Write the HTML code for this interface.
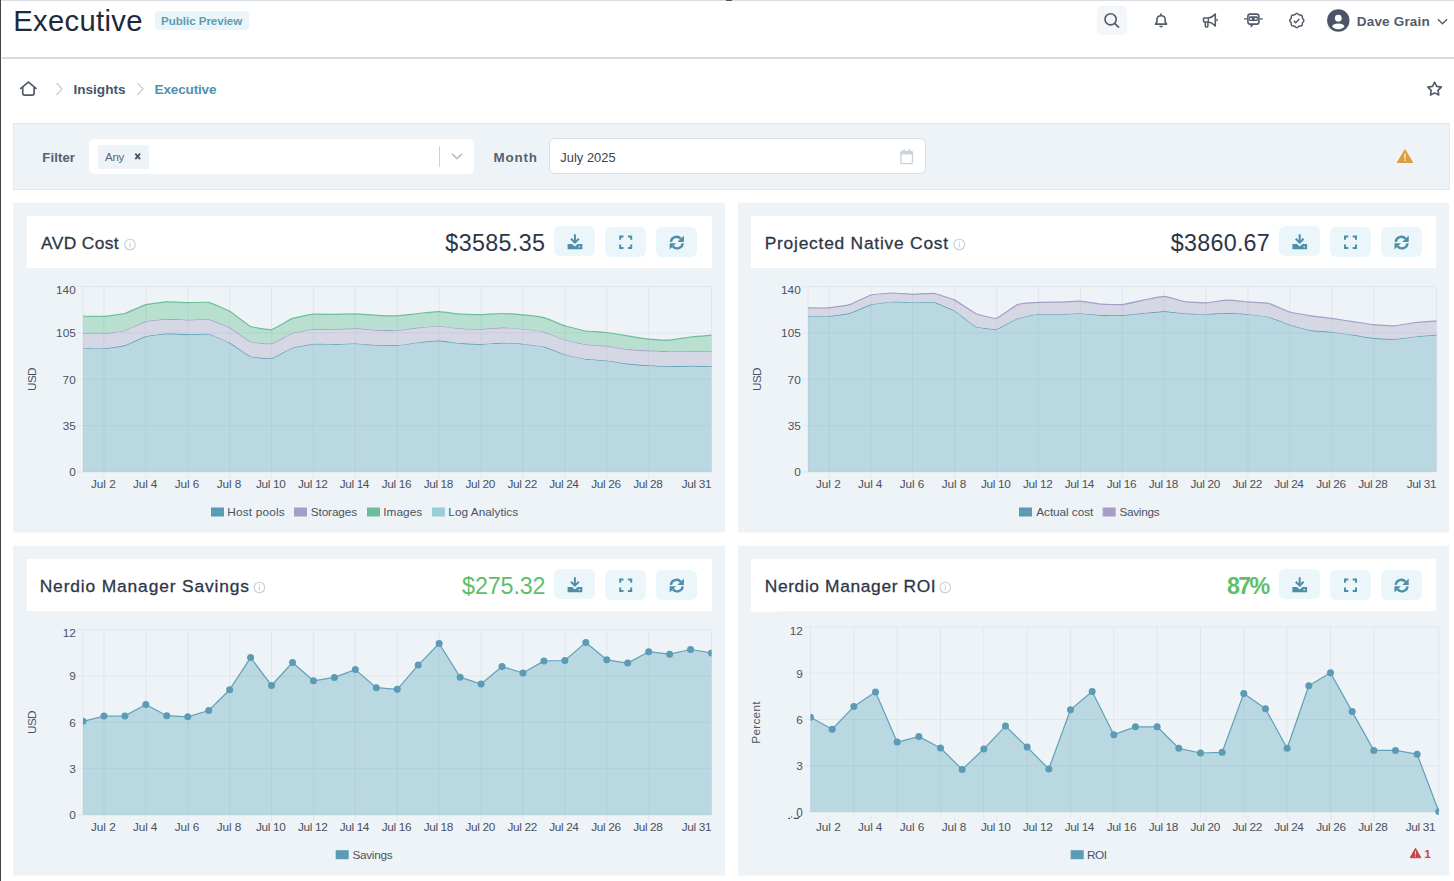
<!DOCTYPE html>
<html><head><meta charset="utf-8"><title>Executive</title>
<style>
html,body{margin:0;padding:0}
body{width:1454px;height:881px;position:relative;overflow:hidden;background:#fff;font-family:'Liberation Sans', sans-serif}
</style></head><body>
<div style="position:absolute;left:13px;top:203px;width:712px;height:329px;background:#eef3f7"></div><div style="position:absolute;left:13px;top:532px;width:712px;height:1px;background:#f6f8fa"></div><div style="position:absolute;left:13px;top:202px;width:712px;height:1px;background:#f8fafb"></div><div style="position:absolute;left:27px;top:216px;width:684.5px;height:52px;background:#fff"></div><div style="position:absolute;left:554.2px;top:226.2px;width:41.3px;height:30px;border-radius:6px;background:#eaf6f9"></div><div style="position:absolute;left:604.9px;top:227.2px;width:41.3px;height:30px;border-radius:6px;background:#eaf6f9"></div><div style="position:absolute;left:656.0px;top:227.2px;width:41.3px;height:30px;border-radius:6px;background:#eaf6f9"></div><div style="position:absolute;left:738px;top:203px;width:711px;height:329px;background:#eef3f7"></div><div style="position:absolute;left:738px;top:532px;width:711px;height:1px;background:#f6f8fa"></div><div style="position:absolute;left:738px;top:202px;width:711px;height:1px;background:#f8fafb"></div><div style="position:absolute;left:751px;top:216px;width:684.5px;height:52px;background:#fff"></div><div style="position:absolute;left:1279.0px;top:226.2px;width:41.3px;height:30px;border-radius:6px;background:#eaf6f9"></div><div style="position:absolute;left:1329.7px;top:227.2px;width:41.3px;height:30px;border-radius:6px;background:#eaf6f9"></div><div style="position:absolute;left:1380.8px;top:227.2px;width:41.3px;height:30px;border-radius:6px;background:#eaf6f9"></div><div style="position:absolute;left:13px;top:546px;width:712px;height:329px;background:#eef3f7"></div><div style="position:absolute;left:13px;top:875px;width:712px;height:1px;background:#f6f8fa"></div><div style="position:absolute;left:13px;top:545px;width:712px;height:1px;background:#f8fafb"></div><div style="position:absolute;left:27px;top:559px;width:684.5px;height:52px;background:#fff"></div><div style="position:absolute;left:554.2px;top:569.2px;width:41.3px;height:30px;border-radius:6px;background:#eaf6f9"></div><div style="position:absolute;left:604.9px;top:570.2px;width:41.3px;height:30px;border-radius:6px;background:#eaf6f9"></div><div style="position:absolute;left:656.0px;top:570.2px;width:41.3px;height:30px;border-radius:6px;background:#eaf6f9"></div><div style="position:absolute;left:738px;top:546px;width:711px;height:329px;background:#eef3f7"></div><div style="position:absolute;left:738px;top:875px;width:711px;height:1px;background:#f6f8fa"></div><div style="position:absolute;left:738px;top:545px;width:711px;height:1px;background:#f8fafb"></div><div style="position:absolute;left:751px;top:559px;width:684.5px;height:52px;background:#fff"></div><div style="position:absolute;left:1279.0px;top:569.2px;width:41.3px;height:30px;border-radius:6px;background:#eaf6f9"></div><div style="position:absolute;left:1329.7px;top:570.2px;width:41.3px;height:30px;border-radius:6px;background:#eaf6f9"></div><div style="position:absolute;left:1380.8px;top:570.2px;width:41.3px;height:30px;border-radius:6px;background:#eaf6f9"></div><div style="position:absolute;left:0;top:0;width:1454px;height:1px;background:#dadee3"></div>
<div style="position:absolute;left:726px;top:0;width:6px;height:1px;background:#555"></div>
<div style="position:absolute;left:752px;top:611px;width:29px;height:1px;background:#fafbfc"></div>
<div style="position:absolute;left:0;top:0;width:1px;height:881px;background:#444"></div>
<div style="position:absolute;left:155px;top:11px;width:93.6px;height:19px;border-radius:4px;background:#e9f5f8"></div>
<div style="position:absolute;left:1.5px;top:57px;width:1452.5px;height:2px;background:#d4dce3"></div>
<div style="position:absolute;left:1097px;top:6px;width:29.6px;height:29.4px;border-radius:5px;background:#f4f7fa"></div>
<div style="position:absolute;left:13px;top:123px;width:1434.5px;height:64.5px;background:#eef3f7;border:1px solid #e3e9ee"></div>
<div style="position:absolute;left:89px;top:138.6px;width:384.7px;height:35.6px;border-radius:5px;background:#fff"></div>
<div style="position:absolute;left:98px;top:145.2px;width:50.7px;height:23.6px;border-radius:2px;background:#eef3f7"></div>
<div style="position:absolute;left:439px;top:146px;width:1px;height:21px;background:#d0d0d0"></div>
<div style="position:absolute;left:549px;top:138px;width:375px;height:34px;border-radius:6px;background:#fff;border:1px solid #d9e0e8"></div>

<svg style="position:absolute;left:0;top:0" width="1454" height="881" viewBox="0 0 1454 881" font-family="Liberation Sans, sans-serif"><line x1="77.0" y1="286.50" x2="711.5" y2="286.50" stroke="#e1e7ec" stroke-width="1"/><line x1="77.0" y1="332.88" x2="711.5" y2="332.88" stroke="#e1e7ec" stroke-width="1"/><line x1="77.0" y1="379.25" x2="711.5" y2="379.25" stroke="#e1e7ec" stroke-width="1"/><line x1="77.0" y1="425.62" x2="711.5" y2="425.62" stroke="#e1e7ec" stroke-width="1"/><line x1="77.0" y1="472.00" x2="711.5" y2="472.00" stroke="#e1e7ec" stroke-width="1"/><line x1="83.00" y1="286.5" x2="83.00" y2="472.0" stroke="#e1e7ec" stroke-width="1"/><line x1="103.95" y1="286.5" x2="103.95" y2="478.0" stroke="#e1e7ec" stroke-width="1"/><line x1="145.85" y1="286.5" x2="145.85" y2="478.0" stroke="#e1e7ec" stroke-width="1"/><line x1="187.75" y1="286.5" x2="187.75" y2="478.0" stroke="#e1e7ec" stroke-width="1"/><line x1="229.65" y1="286.5" x2="229.65" y2="478.0" stroke="#e1e7ec" stroke-width="1"/><line x1="271.55" y1="286.5" x2="271.55" y2="478.0" stroke="#e1e7ec" stroke-width="1"/><line x1="313.45" y1="286.5" x2="313.45" y2="478.0" stroke="#e1e7ec" stroke-width="1"/><line x1="355.35" y1="286.5" x2="355.35" y2="478.0" stroke="#e1e7ec" stroke-width="1"/><line x1="397.25" y1="286.5" x2="397.25" y2="478.0" stroke="#e1e7ec" stroke-width="1"/><line x1="439.15" y1="286.5" x2="439.15" y2="478.0" stroke="#e1e7ec" stroke-width="1"/><line x1="481.05" y1="286.5" x2="481.05" y2="478.0" stroke="#e1e7ec" stroke-width="1"/><line x1="522.95" y1="286.5" x2="522.95" y2="478.0" stroke="#e1e7ec" stroke-width="1"/><line x1="564.85" y1="286.5" x2="564.85" y2="478.0" stroke="#e1e7ec" stroke-width="1"/><line x1="606.75" y1="286.5" x2="606.75" y2="478.0" stroke="#e1e7ec" stroke-width="1"/><line x1="648.65" y1="286.5" x2="648.65" y2="478.0" stroke="#e1e7ec" stroke-width="1"/><line x1="711.50" y1="286.5" x2="711.50" y2="472.0" stroke="#e1e7ec" stroke-width="1"/><path d="M83.00,348.20 C84.16,348.21 101.62,348.56 103.95,348.40 C106.28,348.24 122.57,345.97 124.90,345.30 C127.23,344.63 143.52,336.95 145.85,336.30 C148.18,335.65 164.47,333.71 166.80,333.60 C169.13,333.49 185.42,334.28 187.75,334.30 C190.08,334.32 206.37,333.44 208.70,333.90 C211.03,334.36 227.32,341.35 229.65,342.60 C231.98,343.85 248.27,355.53 250.60,356.40 C252.93,357.27 269.22,358.68 271.55,358.20 C273.88,357.72 290.17,348.49 292.50,347.70 C294.83,346.91 311.12,344.10 313.45,343.90 C315.78,343.70 332.07,344.12 334.40,344.10 C336.73,344.08 353.02,343.45 355.35,343.50 C357.68,343.55 373.97,344.90 376.30,345.00 C378.63,345.10 394.92,345.44 397.25,345.30 C399.58,345.16 415.87,342.66 418.20,342.40 C420.53,342.14 436.82,340.55 439.15,340.60 C441.48,340.65 457.77,343.11 460.10,343.30 C462.43,343.49 478.72,344.13 481.05,344.10 C483.38,344.07 499.67,342.81 502.00,342.80 C504.33,342.79 520.62,343.69 522.95,343.90 C525.28,344.11 541.57,346.02 543.90,346.60 C546.23,347.18 562.52,353.72 564.85,354.40 C567.18,355.08 583.47,358.56 585.80,358.90 C588.13,359.24 604.42,360.23 606.75,360.50 C609.08,360.77 625.37,363.53 627.70,363.80 C630.03,364.07 646.32,365.26 648.65,365.40 C650.98,365.54 667.27,366.28 669.60,366.30 C671.93,366.32 688.22,365.80 690.55,365.80 C692.88,365.80 710.34,366.27 711.50,366.30 L711.50,472.00 L83.00,472.00 Z" fill="#bad8e1"/><path d="M83.00,348.20 C84.16,348.21 101.62,348.56 103.95,348.40 C106.28,348.24 122.57,345.97 124.90,345.30 C127.23,344.63 143.52,336.95 145.85,336.30 C148.18,335.65 164.47,333.71 166.80,333.60 C169.13,333.49 185.42,334.28 187.75,334.30 C190.08,334.32 206.37,333.44 208.70,333.90 C211.03,334.36 227.32,341.35 229.65,342.60 C231.98,343.85 248.27,355.53 250.60,356.40 C252.93,357.27 269.22,358.68 271.55,358.20 C273.88,357.72 290.17,348.49 292.50,347.70 C294.83,346.91 311.12,344.10 313.45,343.90 C315.78,343.70 332.07,344.12 334.40,344.10 C336.73,344.08 353.02,343.45 355.35,343.50 C357.68,343.55 373.97,344.90 376.30,345.00 C378.63,345.10 394.92,345.44 397.25,345.30 C399.58,345.16 415.87,342.66 418.20,342.40 C420.53,342.14 436.82,340.55 439.15,340.60 C441.48,340.65 457.77,343.11 460.10,343.30 C462.43,343.49 478.72,344.13 481.05,344.10 C483.38,344.07 499.67,342.81 502.00,342.80 C504.33,342.79 520.62,343.69 522.95,343.90 C525.28,344.11 541.57,346.02 543.90,346.60 C546.23,347.18 562.52,353.72 564.85,354.40 C567.18,355.08 583.47,358.56 585.80,358.90 C588.13,359.24 604.42,360.23 606.75,360.50 C609.08,360.77 625.37,363.53 627.70,363.80 C630.03,364.07 646.32,365.26 648.65,365.40 C650.98,365.54 667.27,366.28 669.60,366.30 C671.93,366.32 688.22,365.80 690.55,365.80 C692.88,365.80 710.34,366.27 711.50,366.30" fill="none" stroke="#5b9bb5" stroke-width="1.2"/><path d="M83.00,333.20 C84.16,333.21 101.62,333.55 103.95,333.40 C106.28,333.25 122.57,331.17 124.90,330.50 C127.23,329.83 143.52,321.93 145.85,321.30 C148.18,320.67 164.47,319.18 166.80,319.10 C169.13,319.02 185.42,319.79 187.75,319.80 C190.08,319.81 206.37,318.87 208.70,319.30 C211.03,319.73 227.32,326.36 229.65,327.60 C231.98,328.84 248.27,340.82 250.60,341.70 C252.93,342.58 269.22,343.98 271.55,343.50 C273.88,343.02 290.17,333.79 292.50,333.00 C294.83,332.21 311.12,329.41 313.45,329.20 C315.78,328.99 332.07,329.25 334.40,329.20 C336.73,329.15 353.02,328.25 355.35,328.30 C357.68,328.35 373.97,329.98 376.30,330.10 C378.63,330.22 394.92,330.54 397.25,330.40 C399.58,330.26 415.87,327.84 418.20,327.60 C420.53,327.36 436.82,325.95 439.15,326.00 C441.48,326.05 457.77,328.32 460.10,328.50 C462.43,328.68 478.72,329.25 481.05,329.20 C483.38,329.15 499.67,327.61 502.00,327.60 C504.33,327.59 520.62,328.76 522.95,329.00 C525.28,329.24 541.57,331.31 543.90,331.90 C546.23,332.49 562.52,339.01 564.85,339.70 C567.18,340.39 583.47,344.06 585.80,344.40 C588.13,344.74 604.42,345.63 606.75,345.90 C609.08,346.17 625.37,349.04 627.70,349.30 C630.03,349.56 646.32,350.48 648.65,350.60 C650.98,350.72 667.27,351.47 669.60,351.50 C671.93,351.53 688.22,351.11 690.55,351.10 C692.88,351.09 710.34,351.29 711.50,351.30 L711.50,366.30 C710.34,366.27 692.88,365.80 690.55,365.80 C688.22,365.80 671.93,366.32 669.60,366.30 C667.27,366.28 650.98,365.54 648.65,365.40 C646.32,365.26 630.03,364.07 627.70,363.80 C625.37,363.53 609.08,360.77 606.75,360.50 C604.42,360.23 588.13,359.24 585.80,358.90 C583.47,358.56 567.18,355.08 564.85,354.40 C562.52,353.72 546.23,347.18 543.90,346.60 C541.57,346.02 525.28,344.11 522.95,343.90 C520.62,343.69 504.33,342.79 502.00,342.80 C499.67,342.81 483.38,344.07 481.05,344.10 C478.72,344.13 462.43,343.49 460.10,343.30 C457.77,343.11 441.48,340.65 439.15,340.60 C436.82,340.55 420.53,342.14 418.20,342.40 C415.87,342.66 399.58,345.16 397.25,345.30 C394.92,345.44 378.63,345.10 376.30,345.00 C373.97,344.90 357.68,343.55 355.35,343.50 C353.02,343.45 336.73,344.08 334.40,344.10 C332.07,344.12 315.78,343.70 313.45,343.90 C311.12,344.10 294.83,346.91 292.50,347.70 C290.17,348.49 273.88,357.72 271.55,358.20 C269.22,358.68 252.93,357.27 250.60,356.40 C248.27,355.53 231.98,343.85 229.65,342.60 C227.32,341.35 211.03,334.36 208.70,333.90 C206.37,333.44 190.08,334.32 187.75,334.30 C185.42,334.28 169.13,333.49 166.80,333.60 C164.47,333.71 148.18,335.65 145.85,336.30 C143.52,336.95 127.23,344.63 124.90,345.30 C122.57,345.97 106.28,348.24 103.95,348.40 C101.62,348.56 84.16,348.21 83.00,348.20 Z" fill="#d6d7e4"/><path d="M83.00,333.20 C84.16,333.21 101.62,333.55 103.95,333.40 C106.28,333.25 122.57,331.17 124.90,330.50 C127.23,329.83 143.52,321.93 145.85,321.30 C148.18,320.67 164.47,319.18 166.80,319.10 C169.13,319.02 185.42,319.79 187.75,319.80 C190.08,319.81 206.37,318.87 208.70,319.30 C211.03,319.73 227.32,326.36 229.65,327.60 C231.98,328.84 248.27,340.82 250.60,341.70 C252.93,342.58 269.22,343.98 271.55,343.50 C273.88,343.02 290.17,333.79 292.50,333.00 C294.83,332.21 311.12,329.41 313.45,329.20 C315.78,328.99 332.07,329.25 334.40,329.20 C336.73,329.15 353.02,328.25 355.35,328.30 C357.68,328.35 373.97,329.98 376.30,330.10 C378.63,330.22 394.92,330.54 397.25,330.40 C399.58,330.26 415.87,327.84 418.20,327.60 C420.53,327.36 436.82,325.95 439.15,326.00 C441.48,326.05 457.77,328.32 460.10,328.50 C462.43,328.68 478.72,329.25 481.05,329.20 C483.38,329.15 499.67,327.61 502.00,327.60 C504.33,327.59 520.62,328.76 522.95,329.00 C525.28,329.24 541.57,331.31 543.90,331.90 C546.23,332.49 562.52,339.01 564.85,339.70 C567.18,340.39 583.47,344.06 585.80,344.40 C588.13,344.74 604.42,345.63 606.75,345.90 C609.08,346.17 625.37,349.04 627.70,349.30 C630.03,349.56 646.32,350.48 648.65,350.60 C650.98,350.72 667.27,351.47 669.60,351.50 C671.93,351.53 688.22,351.11 690.55,351.10 C692.88,351.09 710.34,351.29 711.50,351.30" fill="none" stroke="#a69dc8" stroke-width="1.2"/><path d="M83.00,316.20 C84.16,316.21 101.62,316.55 103.95,316.40 C106.28,316.25 122.57,314.16 124.90,313.50 C127.23,312.84 143.52,305.24 145.85,304.60 C148.18,303.96 164.47,302.01 166.80,301.90 C169.13,301.79 185.42,302.57 187.75,302.60 C190.08,302.63 206.37,301.92 208.70,302.40 C211.03,302.88 227.32,309.96 229.65,311.30 C231.98,312.64 248.27,325.48 250.60,326.50 C252.93,327.52 269.22,330.05 271.55,329.60 C273.88,329.15 290.17,319.26 292.50,318.40 C294.83,317.54 311.12,314.42 313.45,314.20 C315.78,313.98 332.07,314.42 334.40,314.40 C336.73,314.38 353.02,313.75 355.35,313.80 C357.68,313.85 373.97,315.19 376.30,315.30 C378.63,315.41 394.92,315.90 397.25,315.80 C399.58,315.70 415.87,313.73 418.20,313.50 C420.53,313.27 436.82,311.66 439.15,311.70 C441.48,311.74 457.77,314.04 460.10,314.20 C462.43,314.36 478.72,314.64 481.05,314.60 C483.38,314.56 499.67,313.48 502.00,313.50 C504.33,313.52 520.62,314.67 522.95,314.90 C525.28,315.13 541.57,316.99 543.90,317.60 C546.23,318.21 562.52,325.06 564.85,325.80 C567.18,326.54 583.47,330.63 585.80,331.00 C588.13,331.37 604.42,332.23 606.75,332.50 C609.08,332.77 625.37,335.53 627.70,335.90 C630.03,336.27 646.32,338.97 648.65,339.20 C650.98,339.43 667.27,340.22 669.60,340.10 C671.93,339.98 688.22,337.27 690.55,337.00 C692.88,336.73 710.34,335.30 711.50,335.20 L711.50,351.30 C710.34,351.29 692.88,351.09 690.55,351.10 C688.22,351.11 671.93,351.53 669.60,351.50 C667.27,351.47 650.98,350.72 648.65,350.60 C646.32,350.48 630.03,349.56 627.70,349.30 C625.37,349.04 609.08,346.17 606.75,345.90 C604.42,345.63 588.13,344.74 585.80,344.40 C583.47,344.06 567.18,340.39 564.85,339.70 C562.52,339.01 546.23,332.49 543.90,331.90 C541.57,331.31 525.28,329.24 522.95,329.00 C520.62,328.76 504.33,327.59 502.00,327.60 C499.67,327.61 483.38,329.15 481.05,329.20 C478.72,329.25 462.43,328.68 460.10,328.50 C457.77,328.32 441.48,326.05 439.15,326.00 C436.82,325.95 420.53,327.36 418.20,327.60 C415.87,327.84 399.58,330.26 397.25,330.40 C394.92,330.54 378.63,330.22 376.30,330.10 C373.97,329.98 357.68,328.35 355.35,328.30 C353.02,328.25 336.73,329.15 334.40,329.20 C332.07,329.25 315.78,328.99 313.45,329.20 C311.12,329.41 294.83,332.21 292.50,333.00 C290.17,333.79 273.88,343.02 271.55,343.50 C269.22,343.98 252.93,342.58 250.60,341.70 C248.27,340.82 231.98,328.84 229.65,327.60 C227.32,326.36 211.03,319.73 208.70,319.30 C206.37,318.87 190.08,319.81 187.75,319.80 C185.42,319.79 169.13,319.02 166.80,319.10 C164.47,319.18 148.18,320.67 145.85,321.30 C143.52,321.93 127.23,329.83 124.90,330.50 C122.57,331.17 106.28,333.25 103.95,333.40 C101.62,333.55 84.16,333.21 83.00,333.20 Z" fill="#b8dfcf"/><path d="M83.00,316.20 C84.16,316.21 101.62,316.55 103.95,316.40 C106.28,316.25 122.57,314.16 124.90,313.50 C127.23,312.84 143.52,305.24 145.85,304.60 C148.18,303.96 164.47,302.01 166.80,301.90 C169.13,301.79 185.42,302.57 187.75,302.60 C190.08,302.63 206.37,301.92 208.70,302.40 C211.03,302.88 227.32,309.96 229.65,311.30 C231.98,312.64 248.27,325.48 250.60,326.50 C252.93,327.52 269.22,330.05 271.55,329.60 C273.88,329.15 290.17,319.26 292.50,318.40 C294.83,317.54 311.12,314.42 313.45,314.20 C315.78,313.98 332.07,314.42 334.40,314.40 C336.73,314.38 353.02,313.75 355.35,313.80 C357.68,313.85 373.97,315.19 376.30,315.30 C378.63,315.41 394.92,315.90 397.25,315.80 C399.58,315.70 415.87,313.73 418.20,313.50 C420.53,313.27 436.82,311.66 439.15,311.70 C441.48,311.74 457.77,314.04 460.10,314.20 C462.43,314.36 478.72,314.64 481.05,314.60 C483.38,314.56 499.67,313.48 502.00,313.50 C504.33,313.52 520.62,314.67 522.95,314.90 C525.28,315.13 541.57,316.99 543.90,317.60 C546.23,318.21 562.52,325.06 564.85,325.80 C567.18,326.54 583.47,330.63 585.80,331.00 C588.13,331.37 604.42,332.23 606.75,332.50 C609.08,332.77 625.37,335.53 627.70,335.90 C630.03,336.27 646.32,338.97 648.65,339.20 C650.98,339.43 667.27,340.22 669.60,340.10 C671.93,339.98 688.22,337.27 690.55,337.00 C692.88,336.73 710.34,335.30 711.50,335.20" fill="none" stroke="#6cbf98" stroke-width="1.2"/><clipPath id="clp1"><polygon points="83.00,316.20 103.95,316.40 124.90,313.50 145.85,304.60 166.80,301.90 187.75,302.60 208.70,302.40 229.65,311.30 250.60,326.50 271.55,329.60 292.50,318.40 313.45,314.20 334.40,314.40 355.35,313.80 376.30,315.30 397.25,315.80 418.20,313.50 439.15,311.70 460.10,314.20 481.05,314.60 502.00,313.50 522.95,314.90 543.90,317.60 564.85,325.80 585.80,331.00 606.75,332.50 627.70,335.90 648.65,339.20 669.60,340.10 690.55,337.00 711.50,335.20 711.5,472.0 83.0,472.0"/></clipPath><g clip-path="url(#clp1)"><line x1="83.0" y1="286.50" x2="711.5" y2="286.50" stroke="#6f9aa9" stroke-opacity="0.12" stroke-width="1"/><line x1="83.0" y1="332.88" x2="711.5" y2="332.88" stroke="#6f9aa9" stroke-opacity="0.12" stroke-width="1"/><line x1="83.0" y1="379.25" x2="711.5" y2="379.25" stroke="#6f9aa9" stroke-opacity="0.12" stroke-width="1"/><line x1="83.0" y1="425.62" x2="711.5" y2="425.62" stroke="#6f9aa9" stroke-opacity="0.12" stroke-width="1"/><line x1="83.0" y1="472.00" x2="711.5" y2="472.00" stroke="#6f9aa9" stroke-opacity="0.12" stroke-width="1"/><line x1="83.00" y1="286.5" x2="83.00" y2="472.0" stroke="#6f9aa9" stroke-opacity="0.12" stroke-width="1"/><line x1="103.95" y1="286.5" x2="103.95" y2="472.0" stroke="#6f9aa9" stroke-opacity="0.12" stroke-width="1"/><line x1="145.85" y1="286.5" x2="145.85" y2="472.0" stroke="#6f9aa9" stroke-opacity="0.12" stroke-width="1"/><line x1="187.75" y1="286.5" x2="187.75" y2="472.0" stroke="#6f9aa9" stroke-opacity="0.12" stroke-width="1"/><line x1="229.65" y1="286.5" x2="229.65" y2="472.0" stroke="#6f9aa9" stroke-opacity="0.12" stroke-width="1"/><line x1="271.55" y1="286.5" x2="271.55" y2="472.0" stroke="#6f9aa9" stroke-opacity="0.12" stroke-width="1"/><line x1="313.45" y1="286.5" x2="313.45" y2="472.0" stroke="#6f9aa9" stroke-opacity="0.12" stroke-width="1"/><line x1="355.35" y1="286.5" x2="355.35" y2="472.0" stroke="#6f9aa9" stroke-opacity="0.12" stroke-width="1"/><line x1="397.25" y1="286.5" x2="397.25" y2="472.0" stroke="#6f9aa9" stroke-opacity="0.12" stroke-width="1"/><line x1="439.15" y1="286.5" x2="439.15" y2="472.0" stroke="#6f9aa9" stroke-opacity="0.12" stroke-width="1"/><line x1="481.05" y1="286.5" x2="481.05" y2="472.0" stroke="#6f9aa9" stroke-opacity="0.12" stroke-width="1"/><line x1="522.95" y1="286.5" x2="522.95" y2="472.0" stroke="#6f9aa9" stroke-opacity="0.12" stroke-width="1"/><line x1="564.85" y1="286.5" x2="564.85" y2="472.0" stroke="#6f9aa9" stroke-opacity="0.12" stroke-width="1"/><line x1="606.75" y1="286.5" x2="606.75" y2="472.0" stroke="#6f9aa9" stroke-opacity="0.12" stroke-width="1"/><line x1="648.65" y1="286.5" x2="648.65" y2="472.0" stroke="#6f9aa9" stroke-opacity="0.12" stroke-width="1"/><line x1="711.50" y1="286.5" x2="711.50" y2="472.0" stroke="#6f9aa9" stroke-opacity="0.12" stroke-width="1"/></g><text x="56.07" y="294.10" font-size="11.8" fill="#4a525f">140</text><text x="56.12" y="337.18" font-size="11.8" fill="#4a525f">105</text><text x="62.61" y="383.55" font-size="11.8" fill="#4a525f">70</text><text x="62.67" y="429.93" font-size="11.8" fill="#4a525f">35</text><text x="69.16" y="476.30" font-size="11.8" fill="#4a525f">0</text><text x="91.02" y="488.10" font-size="11.8" letter-spacing="-0.058" fill="#4a525f">Jul 2</text><text x="132.92" y="488.10" font-size="11.8" letter-spacing="-0.117" fill="#4a525f">Jul 4</text><text x="174.82" y="488.10" font-size="11.8" letter-spacing="-0.087" fill="#4a525f">Jul 6</text><text x="216.72" y="488.10" font-size="11.8" letter-spacing="-0.087" fill="#4a525f">Jul 8</text><text x="256.07" y="488.10" font-size="11.8" letter-spacing="-0.371" fill="#4a525f">Jul 10</text><text x="297.97" y="488.10" font-size="11.8" letter-spacing="-0.336" fill="#4a525f">Jul 12</text><text x="339.87" y="488.10" font-size="11.8" letter-spacing="-0.383" fill="#4a525f">Jul 14</text><text x="381.77" y="488.10" font-size="11.8" letter-spacing="-0.360" fill="#4a525f">Jul 16</text><text x="423.67" y="488.10" font-size="11.8" letter-spacing="-0.360" fill="#4a525f">Jul 18</text><text x="465.57" y="488.10" font-size="11.8" letter-spacing="-0.371" fill="#4a525f">Jul 20</text><text x="507.47" y="488.10" font-size="11.8" letter-spacing="-0.336" fill="#4a525f">Jul 22</text><text x="549.37" y="488.10" font-size="11.8" letter-spacing="-0.383" fill="#4a525f">Jul 24</text><text x="591.27" y="488.10" font-size="11.8" letter-spacing="-0.360" fill="#4a525f">Jul 26</text><text x="633.17" y="488.10" font-size="11.8" letter-spacing="-0.360" fill="#4a525f">Jul 28</text><text x="681.82" y="488.10" font-size="11.8" letter-spacing="-0.348" fill="#4a525f">Jul 31</text><g transform="translate(31.2,379) rotate(-90)"><text x="-11.88" y="4.40" font-size="11.8" letter-spacing="-0.741" fill="#4a525f">USD</text></g><line x1="802.0" y1="286.50" x2="1436.5" y2="286.50" stroke="#e1e7ec" stroke-width="1"/><line x1="802.0" y1="332.88" x2="1436.5" y2="332.88" stroke="#e1e7ec" stroke-width="1"/><line x1="802.0" y1="379.25" x2="1436.5" y2="379.25" stroke="#e1e7ec" stroke-width="1"/><line x1="802.0" y1="425.62" x2="1436.5" y2="425.62" stroke="#e1e7ec" stroke-width="1"/><line x1="802.0" y1="472.00" x2="1436.5" y2="472.00" stroke="#e1e7ec" stroke-width="1"/><line x1="808.00" y1="286.5" x2="808.00" y2="472.0" stroke="#e1e7ec" stroke-width="1"/><line x1="828.95" y1="286.5" x2="828.95" y2="478.0" stroke="#e1e7ec" stroke-width="1"/><line x1="870.85" y1="286.5" x2="870.85" y2="478.0" stroke="#e1e7ec" stroke-width="1"/><line x1="912.75" y1="286.5" x2="912.75" y2="478.0" stroke="#e1e7ec" stroke-width="1"/><line x1="954.65" y1="286.5" x2="954.65" y2="478.0" stroke="#e1e7ec" stroke-width="1"/><line x1="996.55" y1="286.5" x2="996.55" y2="478.0" stroke="#e1e7ec" stroke-width="1"/><line x1="1038.45" y1="286.5" x2="1038.45" y2="478.0" stroke="#e1e7ec" stroke-width="1"/><line x1="1080.35" y1="286.5" x2="1080.35" y2="478.0" stroke="#e1e7ec" stroke-width="1"/><line x1="1122.25" y1="286.5" x2="1122.25" y2="478.0" stroke="#e1e7ec" stroke-width="1"/><line x1="1164.15" y1="286.5" x2="1164.15" y2="478.0" stroke="#e1e7ec" stroke-width="1"/><line x1="1206.05" y1="286.5" x2="1206.05" y2="478.0" stroke="#e1e7ec" stroke-width="1"/><line x1="1247.95" y1="286.5" x2="1247.95" y2="478.0" stroke="#e1e7ec" stroke-width="1"/><line x1="1289.85" y1="286.5" x2="1289.85" y2="478.0" stroke="#e1e7ec" stroke-width="1"/><line x1="1331.75" y1="286.5" x2="1331.75" y2="478.0" stroke="#e1e7ec" stroke-width="1"/><line x1="1373.65" y1="286.5" x2="1373.65" y2="478.0" stroke="#e1e7ec" stroke-width="1"/><line x1="1436.50" y1="286.5" x2="1436.50" y2="472.0" stroke="#e1e7ec" stroke-width="1"/><path d="M808.00,316.20 C809.16,316.20 826.62,316.37 828.95,316.20 C831.28,316.03 847.57,313.74 849.90,313.10 C852.23,312.46 868.52,305.23 870.85,304.60 C873.18,303.97 889.47,301.82 891.80,301.70 C894.13,301.58 910.42,302.38 912.75,302.40 C915.08,302.42 931.37,301.63 933.70,302.10 C936.03,302.57 952.32,309.44 954.65,310.80 C956.98,312.16 973.27,325.49 975.60,326.50 C977.93,327.51 994.22,329.45 996.55,329.00 C998.88,328.55 1015.17,319.23 1017.50,318.40 C1019.83,317.57 1036.12,314.24 1038.45,314.00 C1040.78,313.76 1057.07,314.03 1059.40,314.00 C1061.73,313.97 1078.02,313.44 1080.35,313.50 C1082.68,313.56 1098.97,315.00 1101.30,315.10 C1103.63,315.20 1119.92,315.41 1122.25,315.30 C1124.58,315.19 1140.87,313.32 1143.20,313.10 C1145.53,312.88 1161.82,311.28 1164.15,311.30 C1166.48,311.32 1182.77,313.35 1185.10,313.50 C1187.43,313.65 1203.72,314.02 1206.05,314.00 C1208.38,313.98 1224.67,313.09 1227.00,313.10 C1229.33,313.11 1245.62,313.99 1247.95,314.20 C1250.28,314.41 1266.57,316.32 1268.90,316.90 C1271.23,317.48 1287.52,323.96 1289.85,324.70 C1292.18,325.44 1308.47,329.90 1310.80,330.30 C1313.13,330.70 1329.42,331.65 1331.75,331.90 C1334.08,332.15 1350.37,334.46 1352.70,334.80 C1355.03,335.14 1371.32,337.86 1373.65,338.10 C1375.98,338.34 1392.27,339.29 1394.60,339.20 C1396.93,339.11 1413.22,336.74 1415.55,336.50 C1417.88,336.26 1435.34,334.89 1436.50,334.80 L1436.50,472.00 L808.00,472.00 Z" fill="#bad8e1"/><path d="M808.00,316.20 C809.16,316.20 826.62,316.37 828.95,316.20 C831.28,316.03 847.57,313.74 849.90,313.10 C852.23,312.46 868.52,305.23 870.85,304.60 C873.18,303.97 889.47,301.82 891.80,301.70 C894.13,301.58 910.42,302.38 912.75,302.40 C915.08,302.42 931.37,301.63 933.70,302.10 C936.03,302.57 952.32,309.44 954.65,310.80 C956.98,312.16 973.27,325.49 975.60,326.50 C977.93,327.51 994.22,329.45 996.55,329.00 C998.88,328.55 1015.17,319.23 1017.50,318.40 C1019.83,317.57 1036.12,314.24 1038.45,314.00 C1040.78,313.76 1057.07,314.03 1059.40,314.00 C1061.73,313.97 1078.02,313.44 1080.35,313.50 C1082.68,313.56 1098.97,315.00 1101.30,315.10 C1103.63,315.20 1119.92,315.41 1122.25,315.30 C1124.58,315.19 1140.87,313.32 1143.20,313.10 C1145.53,312.88 1161.82,311.28 1164.15,311.30 C1166.48,311.32 1182.77,313.35 1185.10,313.50 C1187.43,313.65 1203.72,314.02 1206.05,314.00 C1208.38,313.98 1224.67,313.09 1227.00,313.10 C1229.33,313.11 1245.62,313.99 1247.95,314.20 C1250.28,314.41 1266.57,316.32 1268.90,316.90 C1271.23,317.48 1287.52,323.96 1289.85,324.70 C1292.18,325.44 1308.47,329.90 1310.80,330.30 C1313.13,330.70 1329.42,331.65 1331.75,331.90 C1334.08,332.15 1350.37,334.46 1352.70,334.80 C1355.03,335.14 1371.32,337.86 1373.65,338.10 C1375.98,338.34 1392.27,339.29 1394.60,339.20 C1396.93,339.11 1413.22,336.74 1415.55,336.50 C1417.88,336.26 1435.34,334.89 1436.50,334.80" fill="none" stroke="#5b9bb5" stroke-width="1.2"/><path d="M808.00,307.90 C809.16,307.90 826.62,308.08 828.95,307.90 C831.28,307.72 847.57,305.32 849.90,304.60 C852.23,303.88 868.52,295.64 870.85,295.00 C873.18,294.36 889.47,293.04 891.80,293.00 C894.13,292.96 910.42,294.28 912.75,294.30 C915.08,294.32 931.37,293.08 933.70,293.40 C936.03,293.72 952.32,298.98 954.65,300.10 C956.98,301.22 973.27,312.48 975.60,313.50 C977.93,314.52 994.22,318.89 996.55,318.40 C998.88,317.91 1015.17,305.49 1017.50,304.60 C1019.83,303.71 1036.12,302.54 1038.45,302.40 C1040.78,302.26 1057.07,302.17 1059.40,302.10 C1061.73,302.03 1078.02,301.09 1080.35,301.20 C1082.68,301.31 1098.97,303.91 1101.30,304.10 C1103.63,304.29 1119.92,304.82 1122.25,304.60 C1124.58,304.38 1140.87,300.56 1143.20,300.10 C1145.53,299.64 1161.82,296.21 1164.15,296.30 C1166.48,296.39 1182.77,301.34 1185.10,301.70 C1187.43,302.06 1203.72,302.89 1206.05,302.80 C1208.38,302.71 1224.67,300.15 1227.00,300.10 C1229.33,300.05 1245.62,301.71 1247.95,301.90 C1250.28,302.09 1266.57,302.94 1268.90,303.50 C1271.23,304.06 1287.52,311.32 1289.85,312.00 C1292.18,312.68 1308.47,315.44 1310.80,315.80 C1313.13,316.16 1329.42,318.08 1331.75,318.40 C1334.08,318.72 1350.37,321.25 1352.70,321.60 C1355.03,321.95 1371.32,324.47 1373.65,324.70 C1375.98,324.93 1392.27,325.92 1394.60,325.80 C1396.93,325.68 1413.22,322.77 1415.55,322.50 C1417.88,322.23 1435.34,320.99 1436.50,320.90 L1436.50,334.80 C1435.34,334.89 1417.88,336.26 1415.55,336.50 C1413.22,336.74 1396.93,339.11 1394.60,339.20 C1392.27,339.29 1375.98,338.34 1373.65,338.10 C1371.32,337.86 1355.03,335.14 1352.70,334.80 C1350.37,334.46 1334.08,332.15 1331.75,331.90 C1329.42,331.65 1313.13,330.70 1310.80,330.30 C1308.47,329.90 1292.18,325.44 1289.85,324.70 C1287.52,323.96 1271.23,317.48 1268.90,316.90 C1266.57,316.32 1250.28,314.41 1247.95,314.20 C1245.62,313.99 1229.33,313.11 1227.00,313.10 C1224.67,313.09 1208.38,313.98 1206.05,314.00 C1203.72,314.02 1187.43,313.65 1185.10,313.50 C1182.77,313.35 1166.48,311.32 1164.15,311.30 C1161.82,311.28 1145.53,312.88 1143.20,313.10 C1140.87,313.32 1124.58,315.19 1122.25,315.30 C1119.92,315.41 1103.63,315.20 1101.30,315.10 C1098.97,315.00 1082.68,313.56 1080.35,313.50 C1078.02,313.44 1061.73,313.97 1059.40,314.00 C1057.07,314.03 1040.78,313.76 1038.45,314.00 C1036.12,314.24 1019.83,317.57 1017.50,318.40 C1015.17,319.23 998.88,328.55 996.55,329.00 C994.22,329.45 977.93,327.51 975.60,326.50 C973.27,325.49 956.98,312.16 954.65,310.80 C952.32,309.44 936.03,302.57 933.70,302.10 C931.37,301.63 915.08,302.42 912.75,302.40 C910.42,302.38 894.13,301.58 891.80,301.70 C889.47,301.82 873.18,303.97 870.85,304.60 C868.52,305.23 852.23,312.46 849.90,313.10 C847.57,313.74 831.28,316.03 828.95,316.20 C826.62,316.37 809.16,316.20 808.00,316.20 Z" fill="#d6d7e4"/><path d="M808.00,307.90 C809.16,307.90 826.62,308.08 828.95,307.90 C831.28,307.72 847.57,305.32 849.90,304.60 C852.23,303.88 868.52,295.64 870.85,295.00 C873.18,294.36 889.47,293.04 891.80,293.00 C894.13,292.96 910.42,294.28 912.75,294.30 C915.08,294.32 931.37,293.08 933.70,293.40 C936.03,293.72 952.32,298.98 954.65,300.10 C956.98,301.22 973.27,312.48 975.60,313.50 C977.93,314.52 994.22,318.89 996.55,318.40 C998.88,317.91 1015.17,305.49 1017.50,304.60 C1019.83,303.71 1036.12,302.54 1038.45,302.40 C1040.78,302.26 1057.07,302.17 1059.40,302.10 C1061.73,302.03 1078.02,301.09 1080.35,301.20 C1082.68,301.31 1098.97,303.91 1101.30,304.10 C1103.63,304.29 1119.92,304.82 1122.25,304.60 C1124.58,304.38 1140.87,300.56 1143.20,300.10 C1145.53,299.64 1161.82,296.21 1164.15,296.30 C1166.48,296.39 1182.77,301.34 1185.10,301.70 C1187.43,302.06 1203.72,302.89 1206.05,302.80 C1208.38,302.71 1224.67,300.15 1227.00,300.10 C1229.33,300.05 1245.62,301.71 1247.95,301.90 C1250.28,302.09 1266.57,302.94 1268.90,303.50 C1271.23,304.06 1287.52,311.32 1289.85,312.00 C1292.18,312.68 1308.47,315.44 1310.80,315.80 C1313.13,316.16 1329.42,318.08 1331.75,318.40 C1334.08,318.72 1350.37,321.25 1352.70,321.60 C1355.03,321.95 1371.32,324.47 1373.65,324.70 C1375.98,324.93 1392.27,325.92 1394.60,325.80 C1396.93,325.68 1413.22,322.77 1415.55,322.50 C1417.88,322.23 1435.34,320.99 1436.50,320.90" fill="none" stroke="#a69dc8" stroke-width="1.2"/><clipPath id="clp2"><polygon points="808.00,307.90 828.95,307.90 849.90,304.60 870.85,295.00 891.80,293.00 912.75,294.30 933.70,293.40 954.65,300.10 975.60,313.50 996.55,318.40 1017.50,304.60 1038.45,302.40 1059.40,302.10 1080.35,301.20 1101.30,304.10 1122.25,304.60 1143.20,300.10 1164.15,296.30 1185.10,301.70 1206.05,302.80 1227.00,300.10 1247.95,301.90 1268.90,303.50 1289.85,312.00 1310.80,315.80 1331.75,318.40 1352.70,321.60 1373.65,324.70 1394.60,325.80 1415.55,322.50 1436.50,320.90 1436.5,472.0 808.0,472.0"/></clipPath><g clip-path="url(#clp2)"><line x1="808.0" y1="286.50" x2="1436.5" y2="286.50" stroke="#6f9aa9" stroke-opacity="0.12" stroke-width="1"/><line x1="808.0" y1="332.88" x2="1436.5" y2="332.88" stroke="#6f9aa9" stroke-opacity="0.12" stroke-width="1"/><line x1="808.0" y1="379.25" x2="1436.5" y2="379.25" stroke="#6f9aa9" stroke-opacity="0.12" stroke-width="1"/><line x1="808.0" y1="425.62" x2="1436.5" y2="425.62" stroke="#6f9aa9" stroke-opacity="0.12" stroke-width="1"/><line x1="808.0" y1="472.00" x2="1436.5" y2="472.00" stroke="#6f9aa9" stroke-opacity="0.12" stroke-width="1"/><line x1="808.00" y1="286.5" x2="808.00" y2="472.0" stroke="#6f9aa9" stroke-opacity="0.12" stroke-width="1"/><line x1="828.95" y1="286.5" x2="828.95" y2="472.0" stroke="#6f9aa9" stroke-opacity="0.12" stroke-width="1"/><line x1="870.85" y1="286.5" x2="870.85" y2="472.0" stroke="#6f9aa9" stroke-opacity="0.12" stroke-width="1"/><line x1="912.75" y1="286.5" x2="912.75" y2="472.0" stroke="#6f9aa9" stroke-opacity="0.12" stroke-width="1"/><line x1="954.65" y1="286.5" x2="954.65" y2="472.0" stroke="#6f9aa9" stroke-opacity="0.12" stroke-width="1"/><line x1="996.55" y1="286.5" x2="996.55" y2="472.0" stroke="#6f9aa9" stroke-opacity="0.12" stroke-width="1"/><line x1="1038.45" y1="286.5" x2="1038.45" y2="472.0" stroke="#6f9aa9" stroke-opacity="0.12" stroke-width="1"/><line x1="1080.35" y1="286.5" x2="1080.35" y2="472.0" stroke="#6f9aa9" stroke-opacity="0.12" stroke-width="1"/><line x1="1122.25" y1="286.5" x2="1122.25" y2="472.0" stroke="#6f9aa9" stroke-opacity="0.12" stroke-width="1"/><line x1="1164.15" y1="286.5" x2="1164.15" y2="472.0" stroke="#6f9aa9" stroke-opacity="0.12" stroke-width="1"/><line x1="1206.05" y1="286.5" x2="1206.05" y2="472.0" stroke="#6f9aa9" stroke-opacity="0.12" stroke-width="1"/><line x1="1247.95" y1="286.5" x2="1247.95" y2="472.0" stroke="#6f9aa9" stroke-opacity="0.12" stroke-width="1"/><line x1="1289.85" y1="286.5" x2="1289.85" y2="472.0" stroke="#6f9aa9" stroke-opacity="0.12" stroke-width="1"/><line x1="1331.75" y1="286.5" x2="1331.75" y2="472.0" stroke="#6f9aa9" stroke-opacity="0.12" stroke-width="1"/><line x1="1373.65" y1="286.5" x2="1373.65" y2="472.0" stroke="#6f9aa9" stroke-opacity="0.12" stroke-width="1"/><line x1="1436.50" y1="286.5" x2="1436.50" y2="472.0" stroke="#6f9aa9" stroke-opacity="0.12" stroke-width="1"/></g><text x="781.07" y="294.10" font-size="11.8" fill="#4a525f">140</text><text x="781.12" y="337.18" font-size="11.8" fill="#4a525f">105</text><text x="787.61" y="383.55" font-size="11.8" fill="#4a525f">70</text><text x="787.67" y="429.93" font-size="11.8" fill="#4a525f">35</text><text x="794.16" y="476.30" font-size="11.8" fill="#4a525f">0</text><text x="816.02" y="488.10" font-size="11.8" letter-spacing="-0.058" fill="#4a525f">Jul 2</text><text x="857.92" y="488.10" font-size="11.8" letter-spacing="-0.117" fill="#4a525f">Jul 4</text><text x="899.82" y="488.10" font-size="11.8" letter-spacing="-0.087" fill="#4a525f">Jul 6</text><text x="941.72" y="488.10" font-size="11.8" letter-spacing="-0.087" fill="#4a525f">Jul 8</text><text x="981.07" y="488.10" font-size="11.8" letter-spacing="-0.371" fill="#4a525f">Jul 10</text><text x="1022.97" y="488.10" font-size="11.8" letter-spacing="-0.336" fill="#4a525f">Jul 12</text><text x="1064.87" y="488.10" font-size="11.8" letter-spacing="-0.383" fill="#4a525f">Jul 14</text><text x="1106.77" y="488.10" font-size="11.8" letter-spacing="-0.360" fill="#4a525f">Jul 16</text><text x="1148.67" y="488.10" font-size="11.8" letter-spacing="-0.360" fill="#4a525f">Jul 18</text><text x="1190.57" y="488.10" font-size="11.8" letter-spacing="-0.371" fill="#4a525f">Jul 20</text><text x="1232.47" y="488.10" font-size="11.8" letter-spacing="-0.336" fill="#4a525f">Jul 22</text><text x="1274.37" y="488.10" font-size="11.8" letter-spacing="-0.383" fill="#4a525f">Jul 24</text><text x="1316.27" y="488.10" font-size="11.8" letter-spacing="-0.360" fill="#4a525f">Jul 26</text><text x="1358.17" y="488.10" font-size="11.8" letter-spacing="-0.360" fill="#4a525f">Jul 28</text><text x="1406.82" y="488.10" font-size="11.8" letter-spacing="-0.348" fill="#4a525f">Jul 31</text><g transform="translate(756.2,379) rotate(-90)"><text x="-11.88" y="4.40" font-size="11.8" letter-spacing="-0.741" fill="#4a525f">USD</text></g><line x1="77.0" y1="629.80" x2="711.5" y2="629.80" stroke="#e1e7ec" stroke-width="1"/><line x1="77.0" y1="676.10" x2="711.5" y2="676.10" stroke="#e1e7ec" stroke-width="1"/><line x1="77.0" y1="722.40" x2="711.5" y2="722.40" stroke="#e1e7ec" stroke-width="1"/><line x1="77.0" y1="768.70" x2="711.5" y2="768.70" stroke="#e1e7ec" stroke-width="1"/><line x1="77.0" y1="815.00" x2="711.5" y2="815.00" stroke="#e1e7ec" stroke-width="1"/><line x1="83.00" y1="629.8" x2="83.00" y2="815.0" stroke="#e1e7ec" stroke-width="1"/><line x1="103.95" y1="629.8" x2="103.95" y2="821.0" stroke="#e1e7ec" stroke-width="1"/><line x1="145.85" y1="629.8" x2="145.85" y2="821.0" stroke="#e1e7ec" stroke-width="1"/><line x1="187.75" y1="629.8" x2="187.75" y2="821.0" stroke="#e1e7ec" stroke-width="1"/><line x1="229.65" y1="629.8" x2="229.65" y2="821.0" stroke="#e1e7ec" stroke-width="1"/><line x1="271.55" y1="629.8" x2="271.55" y2="821.0" stroke="#e1e7ec" stroke-width="1"/><line x1="313.45" y1="629.8" x2="313.45" y2="821.0" stroke="#e1e7ec" stroke-width="1"/><line x1="355.35" y1="629.8" x2="355.35" y2="821.0" stroke="#e1e7ec" stroke-width="1"/><line x1="397.25" y1="629.8" x2="397.25" y2="821.0" stroke="#e1e7ec" stroke-width="1"/><line x1="439.15" y1="629.8" x2="439.15" y2="821.0" stroke="#e1e7ec" stroke-width="1"/><line x1="481.05" y1="629.8" x2="481.05" y2="821.0" stroke="#e1e7ec" stroke-width="1"/><line x1="522.95" y1="629.8" x2="522.95" y2="821.0" stroke="#e1e7ec" stroke-width="1"/><line x1="564.85" y1="629.8" x2="564.85" y2="821.0" stroke="#e1e7ec" stroke-width="1"/><line x1="606.75" y1="629.8" x2="606.75" y2="821.0" stroke="#e1e7ec" stroke-width="1"/><line x1="648.65" y1="629.8" x2="648.65" y2="821.0" stroke="#e1e7ec" stroke-width="1"/><line x1="711.50" y1="629.8" x2="711.50" y2="815.0" stroke="#e1e7ec" stroke-width="1"/><polygon points="83.00,721.30 103.95,716.10 124.90,715.90 145.85,704.50 166.80,715.70 187.75,716.80 208.70,710.50 229.65,689.70 250.60,657.60 271.55,685.50 292.50,662.50 313.45,680.80 334.40,677.40 355.35,669.60 376.30,687.70 397.25,689.30 418.20,665.10 439.15,643.50 460.10,677.20 481.05,684.10 502.00,666.50 522.95,673.00 543.90,660.90 564.85,660.50 585.80,642.40 606.75,659.80 627.70,663.10 648.65,651.70 669.60,654.20 690.55,649.50 711.50,652.90 711.50,815.00 690.55,815.00 669.60,815.00 648.65,815.00 627.70,815.00 606.75,815.00 585.80,815.00 564.85,815.00 543.90,815.00 522.95,815.00 502.00,815.00 481.05,815.00 460.10,815.00 439.15,815.00 418.20,815.00 397.25,815.00 376.30,815.00 355.35,815.00 334.40,815.00 313.45,815.00 292.50,815.00 271.55,815.00 250.60,815.00 229.65,815.00 208.70,815.00 187.75,815.00 166.80,815.00 145.85,815.00 124.90,815.00 103.95,815.00 83.00,815.00" fill="#bad8e1"/><polyline points="83.00,721.30 103.95,716.10 124.90,715.90 145.85,704.50 166.80,715.70 187.75,716.80 208.70,710.50 229.65,689.70 250.60,657.60 271.55,685.50 292.50,662.50 313.45,680.80 334.40,677.40 355.35,669.60 376.30,687.70 397.25,689.30 418.20,665.10 439.15,643.50 460.10,677.20 481.05,684.10 502.00,666.50 522.95,673.00 543.90,660.90 564.85,660.50 585.80,642.40 606.75,659.80 627.70,663.10 648.65,651.70 669.60,654.20 690.55,649.50 711.50,652.90" fill="none" stroke="#64a2ba" stroke-width="1.25" stroke-linejoin="round"/><clipPath id="clp3"><polygon points="83.00,721.30 103.95,716.10 124.90,715.90 145.85,704.50 166.80,715.70 187.75,716.80 208.70,710.50 229.65,689.70 250.60,657.60 271.55,685.50 292.50,662.50 313.45,680.80 334.40,677.40 355.35,669.60 376.30,687.70 397.25,689.30 418.20,665.10 439.15,643.50 460.10,677.20 481.05,684.10 502.00,666.50 522.95,673.00 543.90,660.90 564.85,660.50 585.80,642.40 606.75,659.80 627.70,663.10 648.65,651.70 669.60,654.20 690.55,649.50 711.50,652.90 711.5,815.0 83.0,815.0"/></clipPath><g clip-path="url(#clp3)"><line x1="83.0" y1="629.80" x2="711.5" y2="629.80" stroke="#6f9aa9" stroke-opacity="0.12" stroke-width="1"/><line x1="83.0" y1="676.10" x2="711.5" y2="676.10" stroke="#6f9aa9" stroke-opacity="0.12" stroke-width="1"/><line x1="83.0" y1="722.40" x2="711.5" y2="722.40" stroke="#6f9aa9" stroke-opacity="0.12" stroke-width="1"/><line x1="83.0" y1="768.70" x2="711.5" y2="768.70" stroke="#6f9aa9" stroke-opacity="0.12" stroke-width="1"/><line x1="83.0" y1="815.00" x2="711.5" y2="815.00" stroke="#6f9aa9" stroke-opacity="0.12" stroke-width="1"/><line x1="83.00" y1="629.8" x2="83.00" y2="815.0" stroke="#6f9aa9" stroke-opacity="0.12" stroke-width="1"/><line x1="103.95" y1="629.8" x2="103.95" y2="815.0" stroke="#6f9aa9" stroke-opacity="0.12" stroke-width="1"/><line x1="145.85" y1="629.8" x2="145.85" y2="815.0" stroke="#6f9aa9" stroke-opacity="0.12" stroke-width="1"/><line x1="187.75" y1="629.8" x2="187.75" y2="815.0" stroke="#6f9aa9" stroke-opacity="0.12" stroke-width="1"/><line x1="229.65" y1="629.8" x2="229.65" y2="815.0" stroke="#6f9aa9" stroke-opacity="0.12" stroke-width="1"/><line x1="271.55" y1="629.8" x2="271.55" y2="815.0" stroke="#6f9aa9" stroke-opacity="0.12" stroke-width="1"/><line x1="313.45" y1="629.8" x2="313.45" y2="815.0" stroke="#6f9aa9" stroke-opacity="0.12" stroke-width="1"/><line x1="355.35" y1="629.8" x2="355.35" y2="815.0" stroke="#6f9aa9" stroke-opacity="0.12" stroke-width="1"/><line x1="397.25" y1="629.8" x2="397.25" y2="815.0" stroke="#6f9aa9" stroke-opacity="0.12" stroke-width="1"/><line x1="439.15" y1="629.8" x2="439.15" y2="815.0" stroke="#6f9aa9" stroke-opacity="0.12" stroke-width="1"/><line x1="481.05" y1="629.8" x2="481.05" y2="815.0" stroke="#6f9aa9" stroke-opacity="0.12" stroke-width="1"/><line x1="522.95" y1="629.8" x2="522.95" y2="815.0" stroke="#6f9aa9" stroke-opacity="0.12" stroke-width="1"/><line x1="564.85" y1="629.8" x2="564.85" y2="815.0" stroke="#6f9aa9" stroke-opacity="0.12" stroke-width="1"/><line x1="606.75" y1="629.8" x2="606.75" y2="815.0" stroke="#6f9aa9" stroke-opacity="0.12" stroke-width="1"/><line x1="648.65" y1="629.8" x2="648.65" y2="815.0" stroke="#6f9aa9" stroke-opacity="0.12" stroke-width="1"/><line x1="711.50" y1="629.8" x2="711.50" y2="815.0" stroke="#6f9aa9" stroke-opacity="0.12" stroke-width="1"/></g><clipPath id="clp4"><rect x="83.0" y="619.8" width="628.5" height="205.20000000000005"/></clipPath><g clip-path="url(#clp4)"><circle cx="83.00" cy="721.30" r="3.5" fill="#5b9bb5"/><circle cx="103.95" cy="716.10" r="3.5" fill="#5b9bb5"/><circle cx="124.90" cy="715.90" r="3.5" fill="#5b9bb5"/><circle cx="145.85" cy="704.50" r="3.5" fill="#5b9bb5"/><circle cx="166.80" cy="715.70" r="3.5" fill="#5b9bb5"/><circle cx="187.75" cy="716.80" r="3.5" fill="#5b9bb5"/><circle cx="208.70" cy="710.50" r="3.5" fill="#5b9bb5"/><circle cx="229.65" cy="689.70" r="3.5" fill="#5b9bb5"/><circle cx="250.60" cy="657.60" r="3.5" fill="#5b9bb5"/><circle cx="271.55" cy="685.50" r="3.5" fill="#5b9bb5"/><circle cx="292.50" cy="662.50" r="3.5" fill="#5b9bb5"/><circle cx="313.45" cy="680.80" r="3.5" fill="#5b9bb5"/><circle cx="334.40" cy="677.40" r="3.5" fill="#5b9bb5"/><circle cx="355.35" cy="669.60" r="3.5" fill="#5b9bb5"/><circle cx="376.30" cy="687.70" r="3.5" fill="#5b9bb5"/><circle cx="397.25" cy="689.30" r="3.5" fill="#5b9bb5"/><circle cx="418.20" cy="665.10" r="3.5" fill="#5b9bb5"/><circle cx="439.15" cy="643.50" r="3.5" fill="#5b9bb5"/><circle cx="460.10" cy="677.20" r="3.5" fill="#5b9bb5"/><circle cx="481.05" cy="684.10" r="3.5" fill="#5b9bb5"/><circle cx="502.00" cy="666.50" r="3.5" fill="#5b9bb5"/><circle cx="522.95" cy="673.00" r="3.5" fill="#5b9bb5"/><circle cx="543.90" cy="660.90" r="3.5" fill="#5b9bb5"/><circle cx="564.85" cy="660.50" r="3.5" fill="#5b9bb5"/><circle cx="585.80" cy="642.40" r="3.5" fill="#5b9bb5"/><circle cx="606.75" cy="659.80" r="3.5" fill="#5b9bb5"/><circle cx="627.70" cy="663.10" r="3.5" fill="#5b9bb5"/><circle cx="648.65" cy="651.70" r="3.5" fill="#5b9bb5"/><circle cx="669.60" cy="654.20" r="3.5" fill="#5b9bb5"/><circle cx="690.55" cy="649.50" r="3.5" fill="#5b9bb5"/><circle cx="711.50" cy="652.90" r="3.5" fill="#5b9bb5"/></g><text x="62.79" y="637.40" font-size="11.8" fill="#4a525f">12</text><text x="69.28" y="680.40" font-size="11.8" fill="#4a525f">9</text><text x="69.22" y="726.70" font-size="11.8" fill="#4a525f">6</text><text x="69.22" y="773.00" font-size="11.8" fill="#4a525f">3</text><text x="69.16" y="819.30" font-size="11.8" fill="#4a525f">0</text><text x="91.02" y="831.10" font-size="11.8" letter-spacing="-0.058" fill="#4a525f">Jul 2</text><text x="132.92" y="831.10" font-size="11.8" letter-spacing="-0.117" fill="#4a525f">Jul 4</text><text x="174.82" y="831.10" font-size="11.8" letter-spacing="-0.087" fill="#4a525f">Jul 6</text><text x="216.72" y="831.10" font-size="11.8" letter-spacing="-0.087" fill="#4a525f">Jul 8</text><text x="256.07" y="831.10" font-size="11.8" letter-spacing="-0.371" fill="#4a525f">Jul 10</text><text x="297.97" y="831.10" font-size="11.8" letter-spacing="-0.336" fill="#4a525f">Jul 12</text><text x="339.87" y="831.10" font-size="11.8" letter-spacing="-0.383" fill="#4a525f">Jul 14</text><text x="381.77" y="831.10" font-size="11.8" letter-spacing="-0.360" fill="#4a525f">Jul 16</text><text x="423.67" y="831.10" font-size="11.8" letter-spacing="-0.360" fill="#4a525f">Jul 18</text><text x="465.57" y="831.10" font-size="11.8" letter-spacing="-0.371" fill="#4a525f">Jul 20</text><text x="507.47" y="831.10" font-size="11.8" letter-spacing="-0.336" fill="#4a525f">Jul 22</text><text x="549.37" y="831.10" font-size="11.8" letter-spacing="-0.383" fill="#4a525f">Jul 24</text><text x="591.27" y="831.10" font-size="11.8" letter-spacing="-0.360" fill="#4a525f">Jul 26</text><text x="633.17" y="831.10" font-size="11.8" letter-spacing="-0.360" fill="#4a525f">Jul 28</text><text x="681.82" y="831.10" font-size="11.8" letter-spacing="-0.348" fill="#4a525f">Jul 31</text><g transform="translate(31.2,722) rotate(-90)"><text x="-11.88" y="4.40" font-size="11.8" letter-spacing="-0.741" fill="#4a525f">USD</text></g><line x1="804.5" y1="627.00" x2="1438.8" y2="627.00" stroke="#e1e7ec" stroke-width="1"/><line x1="804.5" y1="673.25" x2="1438.8" y2="673.25" stroke="#e1e7ec" stroke-width="1"/><line x1="804.5" y1="719.50" x2="1438.8" y2="719.50" stroke="#e1e7ec" stroke-width="1"/><line x1="804.5" y1="765.75" x2="1438.8" y2="765.75" stroke="#e1e7ec" stroke-width="1"/><line x1="804.5" y1="812.00" x2="1438.8" y2="812.00" stroke="#e1e7ec" stroke-width="1"/><line x1="810.50" y1="627.0" x2="810.50" y2="812.0" stroke="#e1e7ec" stroke-width="1"/><line x1="853.83" y1="627.0" x2="853.83" y2="818.0" stroke="#e1e7ec" stroke-width="1"/><line x1="897.16" y1="627.0" x2="897.16" y2="818.0" stroke="#e1e7ec" stroke-width="1"/><line x1="940.49" y1="627.0" x2="940.49" y2="818.0" stroke="#e1e7ec" stroke-width="1"/><line x1="983.82" y1="627.0" x2="983.82" y2="818.0" stroke="#e1e7ec" stroke-width="1"/><line x1="1027.16" y1="627.0" x2="1027.16" y2="818.0" stroke="#e1e7ec" stroke-width="1"/><line x1="1070.49" y1="627.0" x2="1070.49" y2="818.0" stroke="#e1e7ec" stroke-width="1"/><line x1="1113.82" y1="627.0" x2="1113.82" y2="818.0" stroke="#e1e7ec" stroke-width="1"/><line x1="1157.15" y1="627.0" x2="1157.15" y2="818.0" stroke="#e1e7ec" stroke-width="1"/><line x1="1200.48" y1="627.0" x2="1200.48" y2="818.0" stroke="#e1e7ec" stroke-width="1"/><line x1="1243.81" y1="627.0" x2="1243.81" y2="818.0" stroke="#e1e7ec" stroke-width="1"/><line x1="1287.14" y1="627.0" x2="1287.14" y2="818.0" stroke="#e1e7ec" stroke-width="1"/><line x1="1330.47" y1="627.0" x2="1330.47" y2="818.0" stroke="#e1e7ec" stroke-width="1"/><line x1="1373.80" y1="627.0" x2="1373.80" y2="818.0" stroke="#e1e7ec" stroke-width="1"/><line x1="1438.80" y1="627.0" x2="1438.80" y2="812.0" stroke="#e1e7ec" stroke-width="1"/><polygon points="810.50,717.30 832.17,729.20 853.83,706.60 875.50,692.00 897.16,742.10 918.83,736.60 940.49,748.00 962.16,769.50 983.82,749.00 1005.49,726.10 1027.16,747.10 1048.82,769.00 1070.49,709.70 1092.15,691.50 1113.82,734.70 1135.48,726.80 1157.15,726.80 1178.81,748.30 1200.48,753.00 1222.14,752.30 1243.81,693.40 1265.48,708.70 1287.14,748.30 1308.81,685.80 1330.47,672.70 1352.14,711.60 1373.80,750.40 1395.47,750.40 1417.13,754.20 1438.80,811.50 1438.80,812.00 1417.13,812.00 1395.47,812.00 1373.80,812.00 1352.14,812.00 1330.47,812.00 1308.81,812.00 1287.14,812.00 1265.48,812.00 1243.81,812.00 1222.14,812.00 1200.48,812.00 1178.81,812.00 1157.15,812.00 1135.48,812.00 1113.82,812.00 1092.15,812.00 1070.49,812.00 1048.82,812.00 1027.16,812.00 1005.49,812.00 983.82,812.00 962.16,812.00 940.49,812.00 918.83,812.00 897.16,812.00 875.50,812.00 853.83,812.00 832.17,812.00 810.50,812.00" fill="#bad8e1"/><polyline points="810.50,717.30 832.17,729.20 853.83,706.60 875.50,692.00 897.16,742.10 918.83,736.60 940.49,748.00 962.16,769.50 983.82,749.00 1005.49,726.10 1027.16,747.10 1048.82,769.00 1070.49,709.70 1092.15,691.50 1113.82,734.70 1135.48,726.80 1157.15,726.80 1178.81,748.30 1200.48,753.00 1222.14,752.30 1243.81,693.40 1265.48,708.70 1287.14,748.30 1308.81,685.80 1330.47,672.70 1352.14,711.60 1373.80,750.40 1395.47,750.40 1417.13,754.20 1438.80,811.50" fill="none" stroke="#64a2ba" stroke-width="1.25" stroke-linejoin="round"/><clipPath id="clp5"><polygon points="810.50,717.30 832.17,729.20 853.83,706.60 875.50,692.00 897.16,742.10 918.83,736.60 940.49,748.00 962.16,769.50 983.82,749.00 1005.49,726.10 1027.16,747.10 1048.82,769.00 1070.49,709.70 1092.15,691.50 1113.82,734.70 1135.48,726.80 1157.15,726.80 1178.81,748.30 1200.48,753.00 1222.14,752.30 1243.81,693.40 1265.48,708.70 1287.14,748.30 1308.81,685.80 1330.47,672.70 1352.14,711.60 1373.80,750.40 1395.47,750.40 1417.13,754.20 1438.80,811.50 1438.8,812.0 810.5,812.0"/></clipPath><g clip-path="url(#clp5)"><line x1="810.5" y1="627.00" x2="1438.8" y2="627.00" stroke="#6f9aa9" stroke-opacity="0.12" stroke-width="1"/><line x1="810.5" y1="673.25" x2="1438.8" y2="673.25" stroke="#6f9aa9" stroke-opacity="0.12" stroke-width="1"/><line x1="810.5" y1="719.50" x2="1438.8" y2="719.50" stroke="#6f9aa9" stroke-opacity="0.12" stroke-width="1"/><line x1="810.5" y1="765.75" x2="1438.8" y2="765.75" stroke="#6f9aa9" stroke-opacity="0.12" stroke-width="1"/><line x1="810.5" y1="812.00" x2="1438.8" y2="812.00" stroke="#6f9aa9" stroke-opacity="0.12" stroke-width="1"/><line x1="810.50" y1="627.0" x2="810.50" y2="812.0" stroke="#6f9aa9" stroke-opacity="0.12" stroke-width="1"/><line x1="853.83" y1="627.0" x2="853.83" y2="812.0" stroke="#6f9aa9" stroke-opacity="0.12" stroke-width="1"/><line x1="897.16" y1="627.0" x2="897.16" y2="812.0" stroke="#6f9aa9" stroke-opacity="0.12" stroke-width="1"/><line x1="940.49" y1="627.0" x2="940.49" y2="812.0" stroke="#6f9aa9" stroke-opacity="0.12" stroke-width="1"/><line x1="983.82" y1="627.0" x2="983.82" y2="812.0" stroke="#6f9aa9" stroke-opacity="0.12" stroke-width="1"/><line x1="1027.16" y1="627.0" x2="1027.16" y2="812.0" stroke="#6f9aa9" stroke-opacity="0.12" stroke-width="1"/><line x1="1070.49" y1="627.0" x2="1070.49" y2="812.0" stroke="#6f9aa9" stroke-opacity="0.12" stroke-width="1"/><line x1="1113.82" y1="627.0" x2="1113.82" y2="812.0" stroke="#6f9aa9" stroke-opacity="0.12" stroke-width="1"/><line x1="1157.15" y1="627.0" x2="1157.15" y2="812.0" stroke="#6f9aa9" stroke-opacity="0.12" stroke-width="1"/><line x1="1200.48" y1="627.0" x2="1200.48" y2="812.0" stroke="#6f9aa9" stroke-opacity="0.12" stroke-width="1"/><line x1="1243.81" y1="627.0" x2="1243.81" y2="812.0" stroke="#6f9aa9" stroke-opacity="0.12" stroke-width="1"/><line x1="1287.14" y1="627.0" x2="1287.14" y2="812.0" stroke="#6f9aa9" stroke-opacity="0.12" stroke-width="1"/><line x1="1330.47" y1="627.0" x2="1330.47" y2="812.0" stroke="#6f9aa9" stroke-opacity="0.12" stroke-width="1"/><line x1="1373.80" y1="627.0" x2="1373.80" y2="812.0" stroke="#6f9aa9" stroke-opacity="0.12" stroke-width="1"/><line x1="1438.80" y1="627.0" x2="1438.80" y2="812.0" stroke="#6f9aa9" stroke-opacity="0.12" stroke-width="1"/></g><clipPath id="clp6"><rect x="810.5" y="617.0" width="628.3" height="205.0"/></clipPath><g clip-path="url(#clp6)"><circle cx="810.50" cy="717.30" r="3.5" fill="#5b9bb5"/><circle cx="832.17" cy="729.20" r="3.5" fill="#5b9bb5"/><circle cx="853.83" cy="706.60" r="3.5" fill="#5b9bb5"/><circle cx="875.50" cy="692.00" r="3.5" fill="#5b9bb5"/><circle cx="897.16" cy="742.10" r="3.5" fill="#5b9bb5"/><circle cx="918.83" cy="736.60" r="3.5" fill="#5b9bb5"/><circle cx="940.49" cy="748.00" r="3.5" fill="#5b9bb5"/><circle cx="962.16" cy="769.50" r="3.5" fill="#5b9bb5"/><circle cx="983.82" cy="749.00" r="3.5" fill="#5b9bb5"/><circle cx="1005.49" cy="726.10" r="3.5" fill="#5b9bb5"/><circle cx="1027.16" cy="747.10" r="3.5" fill="#5b9bb5"/><circle cx="1048.82" cy="769.00" r="3.5" fill="#5b9bb5"/><circle cx="1070.49" cy="709.70" r="3.5" fill="#5b9bb5"/><circle cx="1092.15" cy="691.50" r="3.5" fill="#5b9bb5"/><circle cx="1113.82" cy="734.70" r="3.5" fill="#5b9bb5"/><circle cx="1135.48" cy="726.80" r="3.5" fill="#5b9bb5"/><circle cx="1157.15" cy="726.80" r="3.5" fill="#5b9bb5"/><circle cx="1178.81" cy="748.30" r="3.5" fill="#5b9bb5"/><circle cx="1200.48" cy="753.00" r="3.5" fill="#5b9bb5"/><circle cx="1222.14" cy="752.30" r="3.5" fill="#5b9bb5"/><circle cx="1243.81" cy="693.40" r="3.5" fill="#5b9bb5"/><circle cx="1265.48" cy="708.70" r="3.5" fill="#5b9bb5"/><circle cx="1287.14" cy="748.30" r="3.5" fill="#5b9bb5"/><circle cx="1308.81" cy="685.80" r="3.5" fill="#5b9bb5"/><circle cx="1330.47" cy="672.70" r="3.5" fill="#5b9bb5"/><circle cx="1352.14" cy="711.60" r="3.5" fill="#5b9bb5"/><circle cx="1373.80" cy="750.40" r="3.5" fill="#5b9bb5"/><circle cx="1395.47" cy="750.40" r="3.5" fill="#5b9bb5"/><circle cx="1417.13" cy="754.20" r="3.5" fill="#5b9bb5"/><circle cx="1438.80" cy="811.50" r="3.5" fill="#5b9bb5"/></g><text x="789.79" y="634.60" font-size="11.8" fill="#4a525f">12</text><text x="796.28" y="677.55" font-size="11.8" fill="#4a525f">9</text><text x="796.22" y="723.80" font-size="11.8" fill="#4a525f">6</text><text x="796.22" y="770.05" font-size="11.8" fill="#4a525f">3</text><g transform="translate(802.3,816.8) scale(1,1.12)"><text x="-6.14" y="0.00" font-size="11.8" fill="#4a525f">0</text></g><path d="M788.2,818.4 L790.2,818.4 M791.2,817.2 L792,816.6 M793.6,818.4 L797.6,818.4 Q799,818 799.2,816.6" fill="none" stroke="#4a525f" stroke-width="1.1"/><line x1="828.95" y1="816" x2="828.95" y2="821" stroke="#e1e7ec" stroke-width="1"/><line x1="870.85" y1="816" x2="870.85" y2="821" stroke="#e1e7ec" stroke-width="1"/><line x1="912.75" y1="816" x2="912.75" y2="821" stroke="#e1e7ec" stroke-width="1"/><line x1="954.65" y1="816" x2="954.65" y2="821" stroke="#e1e7ec" stroke-width="1"/><line x1="996.55" y1="816" x2="996.55" y2="821" stroke="#e1e7ec" stroke-width="1"/><line x1="1038.45" y1="816" x2="1038.45" y2="821" stroke="#e1e7ec" stroke-width="1"/><line x1="1080.35" y1="816" x2="1080.35" y2="821" stroke="#e1e7ec" stroke-width="1"/><line x1="1122.25" y1="816" x2="1122.25" y2="821" stroke="#e1e7ec" stroke-width="1"/><line x1="1164.15" y1="816" x2="1164.15" y2="821" stroke="#e1e7ec" stroke-width="1"/><line x1="1206.05" y1="816" x2="1206.05" y2="821" stroke="#e1e7ec" stroke-width="1"/><line x1="1247.95" y1="816" x2="1247.95" y2="821" stroke="#e1e7ec" stroke-width="1"/><line x1="1289.85" y1="816" x2="1289.85" y2="821" stroke="#e1e7ec" stroke-width="1"/><line x1="1331.75" y1="816" x2="1331.75" y2="821" stroke="#e1e7ec" stroke-width="1"/><line x1="1373.65" y1="816" x2="1373.65" y2="821" stroke="#e1e7ec" stroke-width="1"/><text x="816.02" y="831.10" font-size="11.8" letter-spacing="-0.058" fill="#4a525f">Jul 2</text><text x="857.92" y="831.10" font-size="11.8" letter-spacing="-0.117" fill="#4a525f">Jul 4</text><text x="899.82" y="831.10" font-size="11.8" letter-spacing="-0.087" fill="#4a525f">Jul 6</text><text x="941.72" y="831.10" font-size="11.8" letter-spacing="-0.087" fill="#4a525f">Jul 8</text><text x="981.07" y="831.10" font-size="11.8" letter-spacing="-0.371" fill="#4a525f">Jul 10</text><text x="1022.97" y="831.10" font-size="11.8" letter-spacing="-0.336" fill="#4a525f">Jul 12</text><text x="1064.87" y="831.10" font-size="11.8" letter-spacing="-0.383" fill="#4a525f">Jul 14</text><text x="1106.77" y="831.10" font-size="11.8" letter-spacing="-0.360" fill="#4a525f">Jul 16</text><text x="1148.67" y="831.10" font-size="11.8" letter-spacing="-0.360" fill="#4a525f">Jul 18</text><text x="1190.57" y="831.10" font-size="11.8" letter-spacing="-0.371" fill="#4a525f">Jul 20</text><text x="1232.47" y="831.10" font-size="11.8" letter-spacing="-0.336" fill="#4a525f">Jul 22</text><text x="1274.37" y="831.10" font-size="11.8" letter-spacing="-0.383" fill="#4a525f">Jul 24</text><text x="1316.27" y="831.10" font-size="11.8" letter-spacing="-0.360" fill="#4a525f">Jul 26</text><text x="1358.17" y="831.10" font-size="11.8" letter-spacing="-0.360" fill="#4a525f">Jul 28</text><text x="1405.72" y="831.10" font-size="11.8" letter-spacing="-0.348" fill="#4a525f">Jul 31</text><g transform="translate(755.6,722.2) rotate(-90)"><text x="-21.54" y="4.40" font-size="11.8" letter-spacing="0.259" fill="#4a525f">Percent</text></g><rect x="211" y="507.5" width="13" height="9" fill="#5b9bb5"/><text x="227.36" y="515.90" font-size="11.8" letter-spacing="0.178" fill="#4a525f">Host pools</text><rect x="294" y="507.5" width="13" height="9" fill="#a69dc8"/><text x="310.77" y="515.90" font-size="11.8" letter-spacing="-0.131" fill="#4a525f">Storages</text><rect x="367" y="507.5" width="13" height="9" fill="#6cbf98"/><text x="383.24" y="515.90" font-size="11.8" letter-spacing="0.054" fill="#4a525f">Images</text><rect x="432" y="507.5" width="13" height="9" fill="#98cdd9"/><text x="448.36" y="515.90" font-size="11.8" letter-spacing="0.025" fill="#4a525f">Log Analytics</text><rect x="1019" y="507.5" width="13" height="9" fill="#5b9bb5"/><text x="1036.30" y="515.90" font-size="11.8" letter-spacing="-0.074" fill="#4a525f">Actual cost</text><rect x="1102.7" y="507.5" width="13" height="9" fill="#a69dc8"/><text x="1119.47" y="515.90" font-size="11.8" letter-spacing="-0.311" fill="#4a525f">Savings</text><rect x="335.7" y="850.2" width="13" height="9" fill="#5b9bb5"/><text x="352.47" y="858.60" font-size="11.8" letter-spacing="-0.311" fill="#4a525f">Savings</text><rect x="1070.7" y="850.2" width="13" height="9" fill="#5b9bb5"/><text x="1087.06" y="858.60" font-size="11.8" letter-spacing="-0.470" fill="#4a525f">ROI</text><text x="41.10" y="248.80" font-size="17.4" letter-spacing="0.344" fill="#2d3646" stroke="#2d3646" stroke-width="0.28">AVD Cost</text><g transform="translate(130,244.5)"><circle cx="0" cy="0" r="5.3" fill="none" stroke="#c6cfd9" stroke-width="1.1"/><rect x="-0.55" y="-1" width="1.1" height="3.8" fill="#c6cfd9"/><rect x="-0.55" y="-3" width="1.1" height="1.1" fill="#c6cfd9"/></g><g transform="translate(567.20,233.8)"><path d="M7.7 0.5 V8.6" stroke="#4f8ea7" stroke-width="2" fill="none"/><path d="M3.8 5 L7.7 8.9 L11.6 5" stroke="#4f8ea7" stroke-width="2" fill="none"/><path d="M0.4 10.2 H4.9 L7.7 12.8 L10.5 10.2 H15.1 V15.4 H0.4 Z" fill="#4f8ea7"/><rect x="11.4" y="12.4" width="1.6" height="1.2" fill="#e9f5f8"/></g><g transform="translate(619.20,235.5)"><path d="M1 4.3 V1 H4.3 M8.7 1 H12 V4.3 M12 9.1 V12.4 H8.7 M4.3 12.4 H1 V9.1" stroke="#4f8ea7" stroke-width="2" fill="none"/></g><g transform="translate(669.30,235.6)"><path d="M1.6 6.2 A5.6 5.6 0 0 1 11.4 3.2" stroke="#4f8ea7" stroke-width="2.4" fill="none"/><path d="M14.6 0 V6.4 H8.2 Z" fill="#4f8ea7"/><path d="M13.4 7.8 A5.6 5.6 0 0 1 3.6 10.8" stroke="#4f8ea7" stroke-width="2.4" fill="none"/><path d="M0.4 14 V7.6 H6.8 Z" fill="#4f8ea7"/></g><text x="445.37" y="250.90" font-size="23.3" letter-spacing="0.343" fill="#2d3646">$3585.35</text><text x="764.71" y="248.80" font-size="17.4" letter-spacing="0.761" fill="#2d3646" stroke="#2d3646" stroke-width="0.28">Projected Native Cost</text><g transform="translate(959.3,244.5)"><circle cx="0" cy="0" r="5.3" fill="none" stroke="#c6cfd9" stroke-width="1.1"/><rect x="-0.55" y="-1" width="1.1" height="3.8" fill="#c6cfd9"/><rect x="-0.55" y="-3" width="1.1" height="1.1" fill="#c6cfd9"/></g><g transform="translate(1292.00,233.8)"><path d="M7.7 0.5 V8.6" stroke="#4f8ea7" stroke-width="2" fill="none"/><path d="M3.8 5 L7.7 8.9 L11.6 5" stroke="#4f8ea7" stroke-width="2" fill="none"/><path d="M0.4 10.2 H4.9 L7.7 12.8 L10.5 10.2 H15.1 V15.4 H0.4 Z" fill="#4f8ea7"/><rect x="11.4" y="12.4" width="1.6" height="1.2" fill="#e9f5f8"/></g><g transform="translate(1344.00,235.5)"><path d="M1 4.3 V1 H4.3 M8.7 1 H12 V4.3 M12 9.1 V12.4 H8.7 M4.3 12.4 H1 V9.1" stroke="#4f8ea7" stroke-width="2" fill="none"/></g><g transform="translate(1394.10,235.6)"><path d="M1.6 6.2 A5.6 5.6 0 0 1 11.4 3.2" stroke="#4f8ea7" stroke-width="2.4" fill="none"/><path d="M14.6 0 V6.4 H8.2 Z" fill="#4f8ea7"/><path d="M13.4 7.8 A5.6 5.6 0 0 1 3.6 10.8" stroke="#4f8ea7" stroke-width="2.4" fill="none"/><path d="M0.4 14 V7.6 H6.8 Z" fill="#4f8ea7"/></g><text x="1170.87" y="250.90" font-size="23.3" letter-spacing="0.248" fill="#2d3646">$3860.67</text><text x="39.71" y="591.80" font-size="17.4" letter-spacing="0.853" fill="#2d3646" stroke="#2d3646" stroke-width="0.28">Nerdio Manager Savings</text><g transform="translate(259.4,587.5)"><circle cx="0" cy="0" r="5.3" fill="none" stroke="#c6cfd9" stroke-width="1.1"/><rect x="-0.55" y="-1" width="1.1" height="3.8" fill="#c6cfd9"/><rect x="-0.55" y="-3" width="1.1" height="1.1" fill="#c6cfd9"/></g><g transform="translate(567.20,576.8)"><path d="M7.7 0.5 V8.6" stroke="#4f8ea7" stroke-width="2" fill="none"/><path d="M3.8 5 L7.7 8.9 L11.6 5" stroke="#4f8ea7" stroke-width="2" fill="none"/><path d="M0.4 10.2 H4.9 L7.7 12.8 L10.5 10.2 H15.1 V15.4 H0.4 Z" fill="#4f8ea7"/><rect x="11.4" y="12.4" width="1.6" height="1.2" fill="#e9f5f8"/></g><g transform="translate(619.20,578.5)"><path d="M1 4.3 V1 H4.3 M8.7 1 H12 V4.3 M12 9.1 V12.4 H8.7 M4.3 12.4 H1 V9.1" stroke="#4f8ea7" stroke-width="2" fill="none"/></g><g transform="translate(669.30,578.6)"><path d="M1.6 6.2 A5.6 5.6 0 0 1 11.4 3.2" stroke="#4f8ea7" stroke-width="2.4" fill="none"/><path d="M14.6 0 V6.4 H8.2 Z" fill="#4f8ea7"/><path d="M13.4 7.8 A5.6 5.6 0 0 1 3.6 10.8" stroke="#4f8ea7" stroke-width="2.4" fill="none"/><path d="M0.4 14 V7.6 H6.8 Z" fill="#4f8ea7"/></g><text x="462.07" y="593.90" font-size="23.3" letter-spacing="-0.122" fill="#5dbf6c">$275.32</text><text x="764.71" y="591.80" font-size="17.4" letter-spacing="0.620" fill="#2d3646" stroke="#2d3646" stroke-width="0.28">Nerdio Manager ROI</text><g transform="translate(945.2,587.5)"><circle cx="0" cy="0" r="5.3" fill="none" stroke="#c6cfd9" stroke-width="1.1"/><rect x="-0.55" y="-1" width="1.1" height="3.8" fill="#c6cfd9"/><rect x="-0.55" y="-3" width="1.1" height="1.1" fill="#c6cfd9"/></g><g transform="translate(1292.00,576.8)"><path d="M7.7 0.5 V8.6" stroke="#4f8ea7" stroke-width="2" fill="none"/><path d="M3.8 5 L7.7 8.9 L11.6 5" stroke="#4f8ea7" stroke-width="2" fill="none"/><path d="M0.4 10.2 H4.9 L7.7 12.8 L10.5 10.2 H15.1 V15.4 H0.4 Z" fill="#4f8ea7"/><rect x="11.4" y="12.4" width="1.6" height="1.2" fill="#e9f5f8"/></g><g transform="translate(1344.00,578.5)"><path d="M1 4.3 V1 H4.3 M8.7 1 H12 V4.3 M12 9.1 V12.4 H8.7 M4.3 12.4 H1 V9.1" stroke="#4f8ea7" stroke-width="2" fill="none"/></g><g transform="translate(1394.10,578.6)"><path d="M1.6 6.2 A5.6 5.6 0 0 1 11.4 3.2" stroke="#4f8ea7" stroke-width="2.4" fill="none"/><path d="M14.6 0 V6.4 H8.2 Z" fill="#4f8ea7"/><path d="M13.4 7.8 A5.6 5.6 0 0 1 3.6 10.8" stroke="#4f8ea7" stroke-width="2.4" fill="none"/><path d="M0.4 14 V7.6 H6.8 Z" fill="#4f8ea7"/></g><text x="1227.10" y="594.00" font-size="23.3" font-weight="bold" letter-spacing="-1.759" fill="#5dbf6c">87%</text><text x="13.16" y="31.30" font-size="29.2" letter-spacing="0.333" fill="#1f293a">Executive</text><text x="161.05" y="25.40" font-size="11.6" font-weight="bold" letter-spacing="-0.049" fill="#5b9cb6">Public Preview</text><text x="1356.82" y="26.20" font-size="13.5" font-weight="bold" letter-spacing="0.179" fill="#525c6b">Dave Grain</text><text x="73.42" y="94.20" font-size="13.6" font-weight="bold" fill="#4b5567">Insights</text><text x="154.62" y="94.20" font-size="13.6" font-weight="bold" letter-spacing="-0.206" fill="#4f92af">Executive</text><text x="42.24" y="161.80" font-size="13.2" font-weight="bold" letter-spacing="0.096" fill="#586070">Filter</text><text x="105.00" y="160.90" font-size="11.6" letter-spacing="-0.355" fill="#5d6573">Any</text><text x="493.53" y="162.20" font-size="13.4" font-weight="bold" letter-spacing="0.819" fill="#586070">Month</text><text x="560.21" y="162.10" font-size="12.9" letter-spacing="0.037" fill="#3c4350">July 2025</text><circle cx="1110.6" cy="19.3" r="5.6" fill="none" stroke="#505a69" stroke-width="1.6"/><path d="M1114.6,23.3 L1119,27.6" stroke="#505a69" stroke-width="1.7"/><path d="M1155.4,24.1 H1166.7 L1165.2,22 V19.8 Q1165.2,15.8 1161.05,15.8 Q1156.9,15.8 1156.9,19.8 V22 Z" fill="none" stroke="#505a69" stroke-width="1.6" stroke-linejoin="round"/><path d="M1161.05,13.4 V15.8" stroke="#505a69" stroke-width="1.7"/><path d="M1159.3,25.8 H1162.8 V26.5 Q1161.05,28.3 1159.3,26.5 Z" fill="#505a69"/><path d="M1204.4,17.9 H1208.3 Q1212,17.6 1215.3,14.1 V25.9 Q1212,22.3 1208.3,22 H1204.4 Q1203.5,22 1203.5,21.1 V18.8 Q1203.5,17.9 1204.4,17.9 Z" fill="none" stroke="#505a69" stroke-width="1.55" stroke-linejoin="round"/><path d="M1208.3,17.9 V22" stroke="#505a69" stroke-width="1.3"/><path d="M1205.3,22 V25.9 Q1205.3,27 1206.6,27 Q1207.9,27 1207.9,25.9 V22" fill="none" stroke="#505a69" stroke-width="1.5"/><path d="M1216.6,19.1 Q1217.6,20 1216.6,20.9" fill="none" stroke="#505a69" stroke-width="1.4"/><rect x="1247.9" y="14.1" width="11" height="10" rx="2.2" fill="none" stroke="#505a69" stroke-width="1.6"/><rect x="1249" y="16.2" width="8.8" height="4.8" rx="1" fill="#505a69"/><rect x="1249.9" y="17.9" width="2.1" height="1.8" fill="#e8eaee"/><rect x="1254.6" y="17.9" width="2.1" height="1.8" fill="#e8eaee"/><path d="M1244,18.8 H1247.1 M1259.7,18.8 H1262.8" stroke="#505a69" stroke-width="1.3"/><path d="M1250.2,24 L1250.9,27.8 L1254.2,24 Z" fill="#505a69"/><path d="M1303.90,20.50 L1303.82,20.96 L1303.59,21.39 L1303.27,21.79 L1302.93,22.14 L1302.64,22.48 L1302.44,22.83 L1302.33,23.23 L1302.30,23.68 L1302.29,24.17 L1302.23,24.67 L1302.09,25.14 L1301.82,25.52 L1301.44,25.79 L1300.97,25.93 L1300.47,25.99 L1299.97,26.00 L1299.53,26.03 L1299.13,26.14 L1298.78,26.34 L1298.44,26.63 L1298.09,26.97 L1297.69,27.29 L1297.26,27.52 L1296.80,27.60 L1296.34,27.52 L1295.91,27.29 L1295.51,26.97 L1295.16,26.63 L1294.82,26.34 L1294.47,26.14 L1294.07,26.03 L1293.62,26.00 L1293.13,25.99 L1292.63,25.93 L1292.16,25.79 L1291.78,25.52 L1291.51,25.14 L1291.37,24.67 L1291.31,24.17 L1291.30,23.68 L1291.27,23.23 L1291.16,22.83 L1290.96,22.48 L1290.67,22.14 L1290.33,21.79 L1290.01,21.39 L1289.78,20.96 L1289.70,20.50 L1289.78,20.04 L1290.01,19.61 L1290.33,19.21 L1290.67,18.86 L1290.96,18.52 L1291.16,18.17 L1291.27,17.77 L1291.30,17.33 L1291.31,16.83 L1291.37,16.33 L1291.51,15.86 L1291.78,15.48 L1292.16,15.21 L1292.63,15.07 L1293.13,15.01 L1293.62,15.00 L1294.07,14.97 L1294.47,14.86 L1294.82,14.66 L1295.16,14.37 L1295.51,14.03 L1295.91,13.71 L1296.34,13.48 L1296.80,13.40 L1297.26,13.48 L1297.69,13.71 L1298.09,14.03 L1298.44,14.37 L1298.78,14.66 L1299.13,14.86 L1299.53,14.97 L1299.97,15.00 L1300.47,15.01 L1300.97,15.07 L1301.44,15.21 L1301.82,15.48 L1302.09,15.86 L1302.23,16.33 L1302.29,16.83 L1302.30,17.32 L1302.33,17.77 L1302.44,18.17 L1302.64,18.52 L1302.93,18.86 L1303.27,19.21 L1303.59,19.61 L1303.82,20.04 L1303.90,20.50 Z" fill="none" stroke="#505a69" stroke-width="1.45" stroke-linejoin="round"/><path d="M1293.9,20.9 L1295.8,22.7 L1299.3,19.1" fill="none" stroke="#505a69" stroke-width="1.5"/><circle cx="1338.3" cy="20.5" r="11.2" fill="#4b5567"/><circle cx="1338.3" cy="18.2" r="3.4" fill="#fff"/><ellipse cx="1338.3" cy="26.3" rx="5.9" ry="2.9" fill="#fff"/><g transform="translate(1436.5,17.5)"><path d="M1.5 1.8 L6 6.3 L10.5 1.8" fill="none" stroke="#505a69" stroke-width="1.4"/></g><path d="M20.2,88.8 L28.4,82.1 L36.6,88.8" fill="none" stroke="#505a69" stroke-width="1.7" stroke-linejoin="round"/><path d="M22.7,87 V93.3 Q22.7,95.2 24.6,95.2 H32.2 Q34.1,95.2 34.1,93.3 V87" fill="none" stroke="#505a69" stroke-width="1.7" stroke-linejoin="round"/><g transform="translate(54.5,82)"><path d="M2 1 L7.5 7 L2 13" fill="none" stroke="#c6ced8" stroke-width="1.3"/></g><g transform="translate(135.5,82)"><path d="M2 1 L7.5 7 L2 13" fill="none" stroke="#c6ced8" stroke-width="1.3"/></g><path d="M1434.60,82.20 L1436.72,86.39 L1441.35,87.11 L1438.02,90.41 L1438.77,95.04 L1434.60,92.90 L1430.43,95.04 L1431.18,90.41 L1427.85,87.11 L1432.48,86.39 Z" fill="none" stroke="#505a69" stroke-width="1.6" stroke-linejoin="round"/><path d="M135.3,153.6 L140.1,159.1 M140.1,153.6 L135.3,159.1" stroke="#4b5362" stroke-width="1.8"/><g transform="translate(450,152)"><path d="M2 1.8 L7 6.6 L12 1.8" fill="none" stroke="#bdbdbd" stroke-width="1.6"/></g><g transform="translate(899.5,148.5)"><rect x="1.4" y="2.9" width="11.6" height="12.2" rx="1.5" fill="none" stroke="#c9d1db" stroke-width="1.4"/><rect x="1.4" y="2.9" width="11.6" height="3" fill="#c9d1db"/><rect x="3.9" y="0.5" width="1.3" height="3" fill="#c9d1db"/><rect x="9.3" y="0.5" width="1.3" height="3" fill="#c9d1db"/></g><g transform="translate(1397,149)"><path d="M8 1 L15.4 13.4 H0.6 Z" fill="#e09f3a" stroke="#e09f3a" stroke-width="1.2" stroke-linejoin="round"/><rect x="7.3" y="4.6" width="1.4" height="4.8" fill="#fff" fill-opacity="0.85"/><rect x="7.3" y="10.4" width="1.4" height="1.5" fill="#fff" fill-opacity="0.85"/></g><g transform="translate(1409.5,847.5)"><path d="M6 0.8 L11.4 10.2 H0.6 Z" fill="#c9444e" stroke="#c9444e" stroke-width="1" stroke-linejoin="round"/><rect x="5.45" y="3.4" width="1.1" height="3.8" fill="#fff" fill-opacity="0.7"/><rect x="5.45" y="8" width="1.1" height="1.1" fill="#fff" fill-opacity="0.7"/></g><text x="1424.29" y="857.70" font-size="11.8" font-weight="bold" fill="#c9444e">1</text></svg>
</body></html>
